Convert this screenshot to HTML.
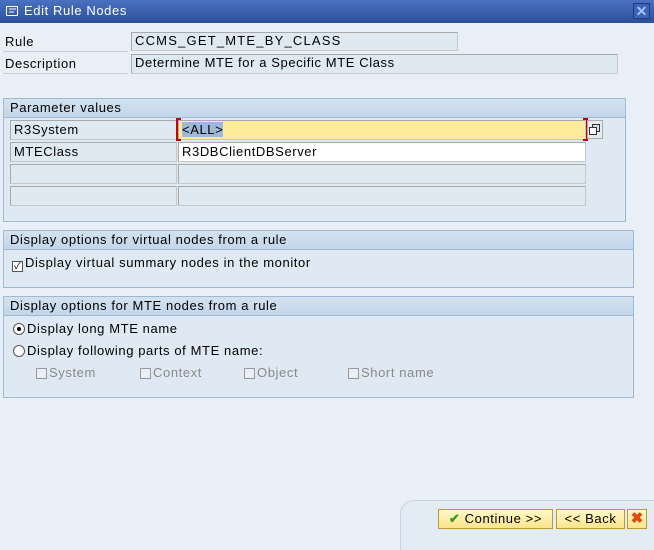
<html><head><style>
body{margin:0;width:654px;height:536px;background:#e9eff6;font-family:"Liberation Sans","Noto Sans CJK JP",sans-serif;font-size:13px;letter-spacing:0.6px;color:#000;position:relative;overflow:hidden}
.a{position:absolute;box-sizing:border-box}
.t{white-space:nowrap}
.fld{border:1px solid #a9a9a9;border-right-color:#c8c8c8;border-bottom-color:#c8c8c8;background:#dfe9f2;padding-left:3px;line-height:16px}
.grp{border:1px solid #9fb8d3;background:#dfe9f3}
.gh{position:absolute;left:0;right:0;top:0;height:18px;background:linear-gradient(#d4e2ef,#c3d6ea);border-bottom:1px solid #9fb8d3;padding-left:6px;line-height:17px}
.btn{border:1px solid #b89a3a;background:linear-gradient(#fff8c8,#fbe58a);line-height:17px;text-align:center}
.cb{display:inline-block;width:11px;height:11px;border:1px solid #555;background:#fff;vertical-align:-2px;margin-right:2px;box-sizing:border-box;letter-spacing:0}
.rd{display:inline-block;width:12px;height:12px;border:1px solid #555;border-radius:50%;background:#fff;vertical-align:-2px;margin-right:2px;box-sizing:border-box;position:relative}
.dis{color:#8a8a8a}.dis .cb{border-color:#999;background:#e9eff6}
</style></head><body>
<div class="a" style="left:0;top:0;width:654px;height:23px;background:linear-gradient(#4a72c0,#2c4f9a);color:#fff;line-height:22px;padding-left:24px">Edit Rule Nodes</div>
<svg class="a" style="left:5px;top:4px" width="16" height="14"><rect x="1.5" y="2.5" width="11" height="9" fill="none" stroke="#fff"/><path d="M4 5h7M4 8h5" stroke="#fff"/></svg>
<div class="a" style="left:633px;top:3px;width:17px;height:16px;border:1px solid #1e3a78;background:#3d63b4;color:#a8c4ff;font-weight:bold;text-align:center;line-height:14px;font-size:14px;letter-spacing:0">✕</div>

<div class="a t" style="left:3px;top:33px;width:125px;height:19px;border-bottom:1px solid #c4cfd9;line-height:18px;padding-left:2px">Rule</div>
<div class="a t" style="left:3px;top:55px;width:125px;height:19px;border-bottom:1px solid #c4cfd9;line-height:18px;padding-left:2px">Description</div>
<div class="a t fld" style="left:131px;top:32px;width:327px;height:19px;letter-spacing:1.2px">CCMS_GET_MTE_BY_CLASS</div>
<div class="a t fld" style="left:131px;top:54px;width:487px;height:20px">Determine MTE for a Specific MTE Class</div>

<div class="a grp" style="left:3px;top:98px;width:623px;height:124px"><div class="gh">Parameter values</div></div>
<div class="a t fld" style="left:10px;top:120px;width:167px;height:20px;line-height:18px">R3System</div>
<div class="a t fld" style="left:10px;top:142px;width:167px;height:20px;line-height:18px">MTEClass</div>
<div class="a fld" style="left:10px;top:164px;width:167px;height:20px"></div>
<div class="a fld" style="left:10px;top:186px;width:167px;height:20px"></div>
<div class="a t fld" style="left:178px;top:120px;width:408px;height:20px;background:#feeb9b;line-height:18px"><span style="background:#9fb8d8">&lt;ALL&gt;</span></div>
<div class="a" style="left:176px;top:118px;width:5px;height:23px;border:2px solid #c00;border-right:none"></div>
<div class="a" style="left:583px;top:118px;width:5px;height:23px;border:2px solid #c00;border-left:none"></div>
<div class="a t fld" style="left:178px;top:142px;width:408px;height:20px;background:#fff;line-height:18px">R3DBClientDBServer</div>
<div class="a fld" style="left:178px;top:164px;width:408px;height:20px"></div>
<div class="a fld" style="left:178px;top:186px;width:408px;height:20px"></div>
<div class="a" style="left:587px;top:120px;width:16px;height:19px;border:1px solid #aaa;background:#e4ebf2"></div>
<svg class="a" style="left:588px;top:122px" width="14" height="14"><rect x="4.5" y="2.5" width="7" height="7" fill="#ddd" stroke="#333"/><rect x="1.5" y="5.5" width="7" height="7" fill="#fff" stroke="#333"/></svg>

<div class="a grp" style="left:3px;top:230px;width:631px;height:58px"><div class="gh">Display options for virtual nodes from a rule</div></div>
<div class="a t" style="left:12px;top:255px"><span class="cb" style="font-size:10px;line-height:9px;text-align:center">✓</span>Display virtual summary nodes in the monitor</div>

<div class="a grp" style="left:3px;top:296px;width:631px;height:102px"><div class="gh">Display options for MTE nodes from a rule</div></div>
<div class="a t" style="left:13px;top:321px"><span class="rd"><span style="position:absolute;left:3px;top:3px;width:4px;height:4px;border-radius:50%;background:#000"></span></span>Display long MTE name</div>
<div class="a t" style="left:13px;top:343px"><span class="rd"></span>Display following parts of MTE name:</div>
<div class="a t dis" style="left:36px;top:365px"><span class="cb"></span>System</div>
<div class="a t dis" style="left:140px;top:365px"><span class="cb"></span>Context</div>
<div class="a t dis" style="left:244px;top:365px"><span class="cb"></span>Object</div>
<div class="a t dis" style="left:348px;top:365px"><span class="cb"></span>Short name</div>

<div class="a" style="left:400px;top:500px;width:270px;height:50px;background:#e3ebf4;border-top:1px solid #c8d3df;border-left:1px solid #c8d3df;border-radius:14px 0 0 0"></div>
<div class="a t btn" style="left:438px;top:509px;width:115px;height:20px"><span style="color:#3a9a20;font-weight:bold">✔</span>&nbsp;Continue &gt;&gt;</div>
<div class="a t btn" style="left:556px;top:509px;width:69px;height:20px">&lt;&lt; Back</div>
<div class="a btn" style="left:627px;top:509px;width:20px;height:20px;color:#e04a10;font-weight:bold;font-size:15px;letter-spacing:0">✖</div>
</body></html>
